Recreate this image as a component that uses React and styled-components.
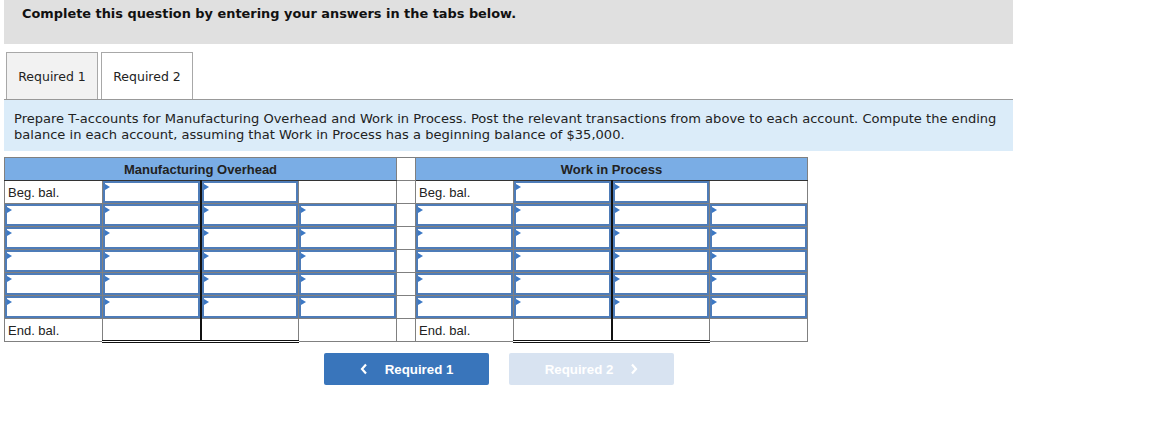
import styled, { createGlobalStyle } from 'styled-components';

const GlobalStyle = createGlobalStyle`
  body {
    margin: 0;
    background: #fff;
    font-family: "DejaVu Sans", Verdana, sans-serif;
  }
`;

const Page = styled.div`
  width: 1009px;
  margin-left: 4px;
`;

const Banner = styled.div`
  height: 44px;
  background: #e0e0e0;
  padding: 6px 0 0 18px;
  box-sizing: border-box;
  font-size: 12.9px;
  font-weight: bold;
  color: #111;
`;

const TabBar = styled.div`
  display: flex;
  gap: 3px;
  padding: 8px 0 0 2px;
`;

const Tab = styled.div`
  width: 92px;
  height: 47px;
  box-sizing: border-box;
  display: flex;
  align-items: center;
  justify-content: center;
  font-size: 12.5px;
  color: #222;
  border: 1px solid #a8a8a8;
  border-bottom: none;
  background: ${p => (p.$active ? '#fff' : '#f2f2f2')};
`;

const Info = styled.div`
  border-top: 1px solid #999;
  background: #dbecf9;
  padding: 11px 10px 8px 10px;
  font-size: 13.05px;
  line-height: 16px;
  color: #222;
`;

const Grid = styled.table`
  margin-top: 6px;
  border-collapse: collapse;
  table-layout: fixed;
  font-family: "Liberation Sans", Arial, sans-serif;
  font-size: 13px;
  color: #222;
`;

const Head = styled.th`
  height: 22px;
  padding: 0;
  background: ${p => (p.$blank ? '#fff' : '#7aade5')};
  border: 1px solid #808080;
  border-bottom: 1px solid ${p => (p.$blank ? '#808080' : '#333')};
  font-weight: bold;
  font-size: 13px;
  color: #222;
`;

const Cell = styled.td`
  width: 98px;
  height: 23px;
  padding: 0;
  box-sizing: border-box;
  border: 1px solid #808080;
  border-right: ${p => (p.$tline ? '2px solid #111' : '1px solid #808080')};
  border-bottom: ${p => (p.$double ? '3px double #111' : '1px solid #808080')};
  vertical-align: middle;
`;

const Gap = styled.td`
  width: 18px;
  padding: 0;
  border: 1px solid #808080;
`;

const Label = styled.span`
  padding-left: 3px;
`;

const Field = styled.div`
  position: relative;
  height: 22px;
  box-sizing: border-box;
  border: 2px solid #4e7cb8;
  background: #fff;
  &::before {
    content: '';
    position: absolute;
    left: 0;
    top: 1px;
    border-left: 5px solid #3c78c4;
    border-top: 3px solid transparent;
    border-bottom: 3px solid transparent;
  }
`;

const Buttons = styled.div`
  display: flex;
  gap: 20px;
  margin: 10px 0 0 320px;
`;

const NavButton = styled.div`
  width: 165px;
  height: 32px;
  border-radius: 2px;
  display: flex;
  align-items: center;
  justify-content: center;
  gap: 17px;
  font-family: "Liberation Sans", Arial, sans-serif;
  font-weight: bold;
  font-size: 13.3px;
  color: #fff;
  background: ${p => (p.$disabled ? '#d8e3f1' : '#3975bb')};
`;

const Chevron = ({ dir }) => (
  <svg width="8" height="12" viewBox="0 0 8 12">
    <path
      d={dir === 'left' ? 'M6 1.5 L2 6 L6 10.5' : 'M2 1.5 L6 6 L2 10.5'}
      stroke="#fff"
      strokeWidth="2.2"
      fill="none"
    />
  </svg>
);

const InputRow = () => (
  <tr>
    <Cell><Field /></Cell>
    <Cell $tline><Field /></Cell>
    <Cell><Field /></Cell>
    <Cell><Field /></Cell>
    <Gap />
    <Cell><Field /></Cell>
    <Cell $tline><Field /></Cell>
    <Cell><Field /></Cell>
    <Cell><Field /></Cell>
  </tr>
);

export default function App() {
  return (
    <Page>
      <GlobalStyle />
      <Banner>Complete this question by entering your answers in the tabs below.</Banner>
      <TabBar>
        <Tab>Required 1</Tab>
        <Tab $active>Required 2</Tab>
      </TabBar>
      <Info>
        Prepare T-accounts for Manufacturing Overhead and Work in Process. Post the relevant transactions from above to each account. Compute the ending balance in each account, assuming that Work in Process has a beginning balance of $35,000.
      </Info>
      <Grid>
        <thead>
          <tr>
            <Head colSpan={4}>Manufacturing Overhead</Head>
            <Head $blank />
            <Head colSpan={4}>Work in Process</Head>
          </tr>
        </thead>
        <tbody>
          <tr>
            <Cell><Label>Beg. bal.</Label></Cell>
            <Cell $tline><Field /></Cell>
            <Cell><Field /></Cell>
            <Cell />
            <Gap />
            <Cell><Label>Beg. bal.</Label></Cell>
            <Cell $tline><Field /></Cell>
            <Cell><Field /></Cell>
            <Cell />
          </tr>
          {[0, 1, 2, 3, 4].map(i => (
            <InputRow key={i} />
          ))}
          <tr>
            <Cell><Label>End. bal.</Label></Cell>
            <Cell $double $tline />
            <Cell $double />
            <Cell />
            <Gap />
            <Cell><Label>End. bal.</Label></Cell>
            <Cell $double $tline />
            <Cell $double />
            <Cell />
          </tr>
        </tbody>
      </Grid>
      <Buttons>
        <NavButton>
          <Chevron dir="left" />
          Required 1
        </NavButton>
        <NavButton $disabled>
          Required 2
          <Chevron dir="right" />
        </NavButton>
      </Buttons>
    </Page>
  );
}
